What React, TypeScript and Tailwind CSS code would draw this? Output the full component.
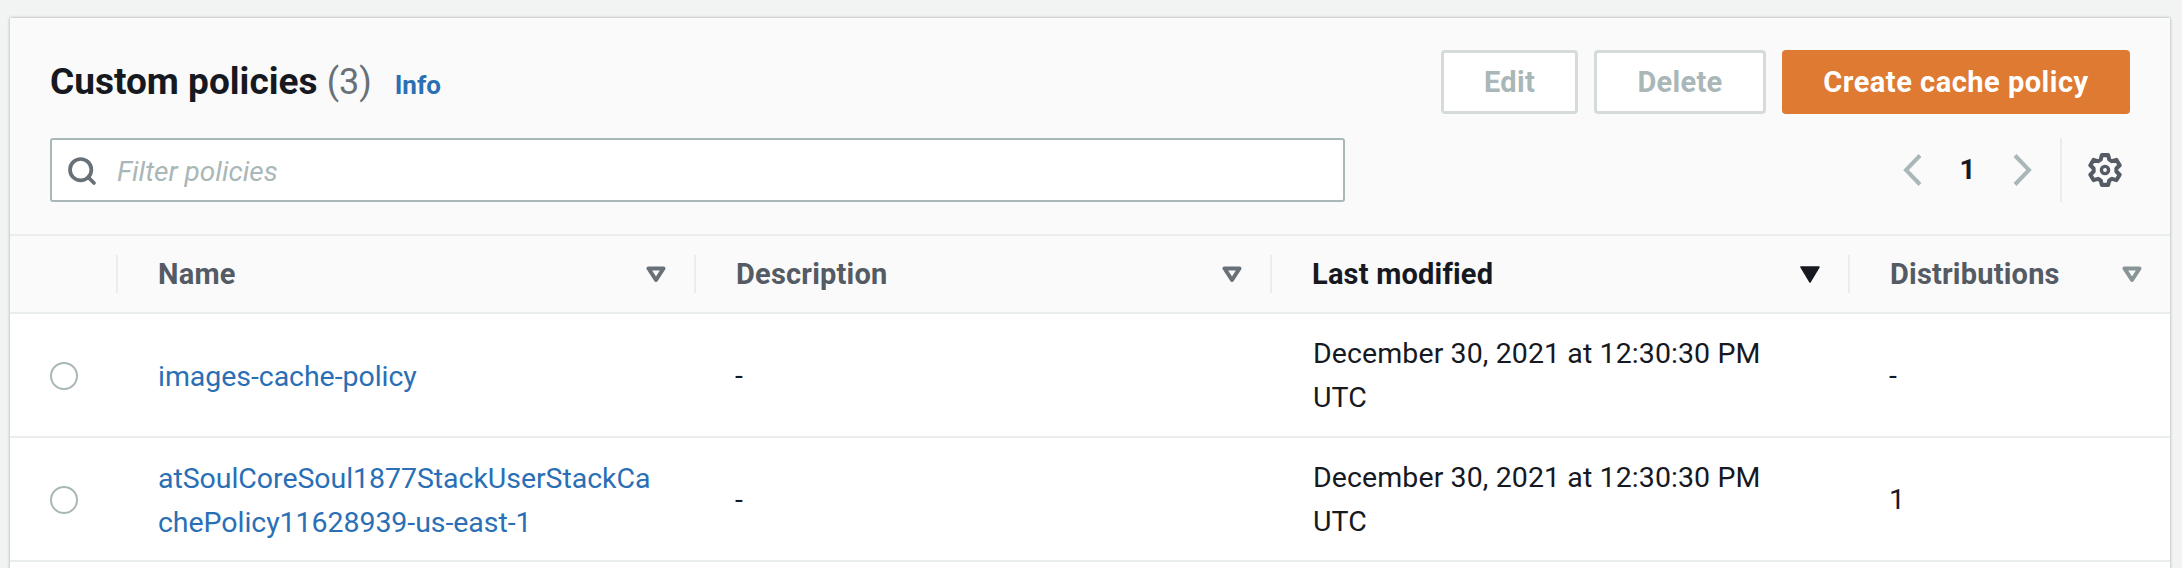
import React from "react";
import { Search } from "lucide-react";

const font = "font-['Roboto','Liberation_Sans',sans-serif]";

const SortIcon = ({ active, muted }: { active?: boolean; muted?: boolean }) => (
  <svg width="20" height="17" viewBox="0 0 20 17" className="shrink-0">
    {active ? (
      <path d="M1 1h18L10 16z" fill="#16191f" stroke="#16191f" strokeWidth="1.5" strokeLinejoin="round" />
    ) : (
      <path d="M2.500 2.500h15L10 14z" fill="none" stroke={muted ? "#879596" : "#687078"} strokeWidth="4" strokeLinejoin="round" />
    )}
  </svg>
);

const Chevron = ({ dir }: { dir: "left" | "right" }) => (
  <svg width="19" height="32" viewBox="0 0 19 32" fill="none" stroke="#aab7b8" strokeWidth="4">
    <path d={dir === "left" ? "M17 1.500L3 16 17 30.500" : "M2 1.500L16 16 2 30.500"} />
  </svg>
);

// eight-tooth cog, thick outline with a small hub
const Gear = () => (
  <svg width="34" height="34" viewBox="0 0 32 32" fill="none" stroke="#545b64" strokeWidth="3.8" strokeLinejoin="round">
    <path d="M13 2h6l1 4.200 2.600 1.500 4.200-1.200 3 5.100-3.100 3v2.800l3.100 3-3 5.100-4.200-1.200-2.600 1.500-1 4.200h-6l-1-4.200-2.600-1.500-4.200 1.200-3-5.100 3.100-3v-2.800l-3.100-3 3-5.100 4.200 1.200L12 6.200z" />
    <circle cx="16" cy="16" r="3.400" strokeWidth="3.200" />
  </svg>
);

const Radio = () => <span className="block w-[28px] h-[28px] rounded-full border-[2.5px] border-[#aab7b8] bg-white" />;

const HeaderCell = ({ label, active, muted }: { label: string; active?: boolean; muted?: boolean }) => (
  <div className="flex items-center justify-between h-[38px] border-l-2 border-[#eaeded] pl-[40px] pr-[28px]">
    <span className={`pt-[1px] text-[29px] font-bold tracking-[0.2px] ${active ? "text-[#16191f]" : "text-[#545b64]"}`}>{label}</span>
    <SortIcon active={active} muted={muted} />
  </div>
);

const COLS = "grid grid-cols-[106px_578px_576px_578px_1fr]";

const Row = ({ name, dist }: { name: string; dist: string }) => (
  <div className={`${COLS} items-center h-[124px] pt-[2px] bg-white border-b-2 border-[#eaeded] text-[28.500px] leading-[44px] text-[#16191f]`}>
    <div className="pl-[40px]">
      <Radio />
    </div>
    <div className="pl-[42px] pr-[42px] pt-[1px] break-all text-[#2a6fb5] tracking-[-0.05px]">{name}</div>
    <div className="pl-[41px]">-</div>
    <div className="pl-[43px] pr-[70px] tracking-[0.1px]">December 30, 2021 at 12:30:30 PM UTC</div>
    <div className="pl-[41px]">{dist}</div>
  </div>
);

export default function App() {
  return (
    <div className={`h-[568px] overflow-hidden bg-[#f2f3f3] pt-[18px] pl-[10px] pr-[12px] ${font}`}>
      <div className="bg-[#fafafa] shadow-[0_0_3px_rgba(0,28,36,0.35)] h-[600px]">
        <div className="px-[40px] pt-[32px] pb-[32px] border-b-2 border-[#eaeded]">
          <div className="flex items-center justify-between h-[64px]">
            <div className="flex items-baseline">
              <h2 className="text-[37px] font-bold text-[#16191f]">
                Custom policies <span className="font-normal text-[36px] text-[#687078]">(3)</span>
              </h2>
              <a className="ml-[23px] text-[26px] font-bold text-[#2a6fb5]">Info</a>
            </div>
            <div className="flex gap-[16px]">
              <button className="w-[137px] h-[64px] pt-[2px] bg-white border-[3px] border-[#d5dbdb] rounded-[4px] text-[29px] font-bold tracking-[0.3px] text-[#aab7b8]">Edit</button>
              <button className="w-[172px] h-[64px] pt-[2px] bg-white border-[3px] border-[#d5dbdb] rounded-[4px] text-[29px] font-bold tracking-[0.3px] text-[#aab7b8]">Delete</button>
              <button className="w-[348px] h-[64px] pt-[2px] bg-[#df7a33] rounded-[4px] text-[29px] font-bold tracking-[0.5px] text-white">Create cache policy</button>
            </div>
          </div>
          <div className="flex items-center justify-between mt-[24px] h-[64px]">
            <div className="relative w-[1295px] h-[64px]">
              <Search className="absolute left-[16px] top-[17px] w-[32px] h-[32px] text-[#687078]" strokeWidth={2.8} />
              <input
                readOnly
                placeholder="Filter policies"
                className="w-full h-full bg-white border-2 border-[#aab7b8] rounded-[3px] pl-[65px] pt-[3px] text-[28px] italic placeholder:text-[#aab7b8] outline-none"
              />
            </div>
            <div className="flex items-center h-[64px] mr-[8px]">
              <Chevron dir="left" />
              <span className="w-[91px] text-center text-[28px] font-bold text-[#16191f]">1</span>
              <Chevron dir="right" />
              <div className="ml-[28px] h-[64px] border-l-2 border-[#eaeded] pl-[26px] flex items-center">
                <Gear />
              </div>
            </div>
          </div>
        </div>

        <div className={`${COLS} items-center h-[78px] border-b-2 border-[#eaeded]`}>
          <div />
          <HeaderCell label="Name" />
          <HeaderCell label="Description" />
          <HeaderCell label="Last modified" active />
          <HeaderCell label="Distributions" muted />
        </div>

        <Row name="images-cache-policy" dist="-" />
        <Row name="atSoulCoreSoul1877StackUserStackCachePolicy11628939-us-east-1" dist="1" />
        <div className="bg-white h-[20px]" />
      </div>
    </div>
  );
}
